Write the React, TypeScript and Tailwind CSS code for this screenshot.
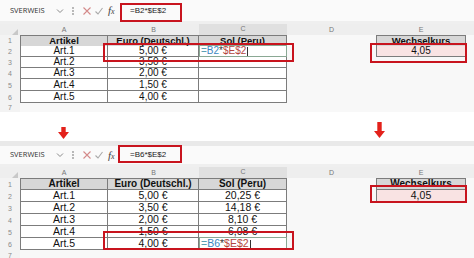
import type { ReactNode } from "react";

const grid = "grid grid-cols-[20px_88px_91px_88px_89px_90px_1fr]";
const letters = ["A", "B", "C", "D", "E"];

type SheetProps = {
  formula: string;
  rows: string[][];
  edit: { row: number; ref: string };
  heights: string[];
  text: string;
  head: string;
  barH: string;
  topStrip?: boolean;
  boxes: ReactNode;
};

function Icons() {
  return (
    <div className="flex items-center">
      <svg width="8" height="6" viewBox="0 0 8 6">
        <polyline points="1,1.5 4,4.5 7,1.5" fill="none" stroke="#8a8a8a" strokeWidth="1" />
      </svg>
      <svg width="4" height="10" viewBox="0 0 4 10" className="ml-[7px]">
        <circle cx="2" cy="2" r="0.9" fill="#999" />
        <circle cx="2" cy="5" r="0.9" fill="#999" />
        <circle cx="2" cy="8" r="0.9" fill="#999" />
      </svg>
      <svg width="8" height="8" viewBox="0 0 8 8" className="ml-[8px]">
        <path d="M0.5 0.5 L7.5 7.5 M7.5 0.5 L0.5 7.5" stroke="#d48a8a" strokeWidth="1.1" />
      </svg>
      <svg width="8" height="8" viewBox="0 0 8 8" className="ml-[4px]">
        <polyline points="0.5,4.5 3,7 7.5,1" fill="none" stroke="#a9a9a9" strokeWidth="1.1" />
      </svg>
      <span className="ml-[5px] w-[10px] font-['Liberation_Serif',serif] italic text-[11px] text-[#444] leading-none">
        f<span className="text-[8px]">x</span>
      </span>
    </div>
  );
}

function Formula({ parts }: { parts: string }) {
  const m = parts.match(/^(=)(B\d)(\*)(\$E\$2)$/);
  if (!m) return <>{parts}</>;
  return (
    <span className="whitespace-nowrap">
      <span className="text-[#5a9fb5]">{m[1]}</span>
      <span className="text-[#3b86c0]">{m[2]}</span>
      <span className="text-[#333]">{m[3]}</span>
      <span className="text-[#b4463f]">{m[4]}</span>
      <span className="inline-block w-px h-[9px] bg-[#333] align-middle ml-px" />
    </span>
  );
}

function Sheet({ formula, rows, edit, heights, text, head, barH, topStrip, boxes }: SheetProps) {
  const b = "border-[#7c7c7c]";
  return (
    <div className="relative">
      {topStrip && <div className="h-[5px] bg-[#e9e9e9]" />}
      <div className={`${barH} flex items-center bg-[#fafafa]`}>
        <div className="w-[56px] pl-[10px] font-['Open_Sans',sans-serif] text-[7.5px] text-[#333]">
          SVERWEIS
        </div>
        <Icons />
        <div className="ml-[12px] font-['Liberation_Sans',sans-serif] text-[8px] text-[#222]">{formula}</div>
      </div>
      <div className="h-[3px] bg-[#efefef]" />
      <div className={`${grid} h-[11px] bg-[#eeeeee] font-['Liberation_Sans',sans-serif] text-[7px] text-[#777]`}>
        <div className="flex items-end justify-end pr-[2px] pb-[1px]">
          <svg width="6" height="6" viewBox="0 0 6 6">
            <polygon points="6,0 6,6 0,6" fill="#c8c8c8" />
          </svg>
        </div>
        {letters.map((l) => (
          <div
            key={l}
            className={`flex items-center justify-center ${l === "C" ? "bg-[#e0e0e0] border-b border-[#6f9f7f]" : ""}`}
          >
            {l}
          </div>
        ))}
        <div />
      </div>
      {rows.map((r, i) => {
        const n = i + 1;
        const header = i === 0;
        const cell = header
          ? `bg-[#d7d7d7] font-bold ${head} border-r border-b border-t ${b}`
          : `bg-white border-r border-b ${b}`;
        return (
          <div
            key={n}
            className={`${grid} ${heights[i]} font-['Liberation_Sans',sans-serif] ${text} text-[#111] leading-none`}
          >
            <div className="flex items-center justify-center text-[7px] text-[#8a8a8a] bg-[#f3f3f3]">{n}</div>
            {n <= 6 ? (
              <>
                <div className={`flex items-center justify-center border-l ${cell}`}>{r[0]}</div>
                <div
                  className={`flex items-center justify-center ${cell} ${n === edit.row ? "bg-[#d8ebf2]" : ""}`}
                >
                  {r[1]}
                </div>
                {n === edit.row ? (
                  <div className="flex items-center pl-[1px] bg-white border border-[#8aa894] -mt-px">
                    <Formula parts={edit.ref} />
                  </div>
                ) : (
                  <div className={`flex items-center justify-center ${cell}`}>{r[2]}</div>
                )}
              </>
            ) : (
              <>
                <div />
                <div />
                <div />
              </>
            )}
            <div />
            {n === 1 && (
              <div className={`flex items-center justify-center border-l ${cell}`}>Wechselkurs</div>
            )}
            {n === 2 && (
              <div className={`flex items-center justify-center border-l border-r border-b ${b} bg-[#f9e3e3]`}>
                4,05
              </div>
            )}
            {n > 2 && <div />}
            <div />
          </div>
        );
      })}
      {boxes}
    </div>
  );
}

function Box({ c }: { c: string }) {
  return <div className={`absolute border-2 border-[#c8141e] ${c}`} />;
}

function Arrow({ h, c }: { h: number; c: string }) {
  return (
    <svg width="11" height={h} viewBox={`0 0 11 ${h}`} className={c}>
      <rect x="3.3" y="0" width="4.4" height={h - 6} fill="#e3211b" />
      <polygon points={`0,${h - 7} 11,${h - 7} 5.5,${h}`} fill="#e3211b" />
    </svg>
  );
}

const base = [
  ["Artikel", "Euro (Deutschl.)", "Sol (Peru)"],
  ["Art.1", "5,00 €", ""],
  ["Art.2", "3,50 €", ""],
  ["Art.3", "2,00 €", ""],
  ["Art.4", "1,50 €", ""],
  ["Art.5", "4,00 €", ""],
  ["", "", ""],
];

const filled = [
  ["Artikel", "Euro (Deutschl.)", "Sol (Peru)"],
  ["Art.1", "5,00 €", "20,25 €"],
  ["Art.2", "3,50 €", "14,18 €"],
  ["Art.3", "2,00 €", "8,10 €"],
  ["Art.4", "1,50 €", "6,08 €"],
  ["Art.5", "4,00 €", ""],
  ["", "", ""],
];

export default function App() {
  return (
    <div className="w-[474px] h-[258px] overflow-hidden bg-[#f8f8f8]">
      <Sheet
        formula="=B2*$E$2"
        rows={base}
        edit={{ row: 2, ref: "=B2*$E$2" }}
        heights={["h-[11px]", "h-[11px]", "h-[11px]", "h-[11px]", "h-[12px]", "h-[12px]", "h-[9px]"]}
        text="text-[10px]"
        head="text-[9.5px]"
        barH="h-[21px]"
        boxes={
          <>
            <Box c="left-[120px] top-[3px] w-[62px] h-[19px]" />
            <Box c="left-[103px] top-[43px] w-[191px] h-[19px]" />
            <Box c="left-[370px] top-[43px] w-[97px] h-[20px]" />
          </>
        }
      />
      <div className="flex h-[29px] bg-white">
        <Arrow h={12} c="ml-[58px] mt-[15px]" />
        <Arrow h={16} c="ml-[305px] mt-[10px]" />
      </div>
      <Sheet
        formula="=B6*$E$2"
        rows={filled}
        edit={{ row: 6, ref: "=B6*$E$2" }}
        heights={["h-[12px]", "h-[12px]", "h-[12px]", "h-[12px]", "h-[12px]", "h-[12px]", "h-[11px]"]}
        text="text-[10.5px]"
        head="text-[10px]"
        barH="h-[18px]"
        topStrip
        boxes={
          <>
            <Box c="left-[118px] top-[4px] w-[64px] h-[18px]" />
            <Box c="left-[103px] top-[90px] w-[191px] h-[19px]" />
            <Box c="left-[370px] top-[44px] w-[97px] h-[18px]" />
          </>
        }
      />
    </div>
  );
}
